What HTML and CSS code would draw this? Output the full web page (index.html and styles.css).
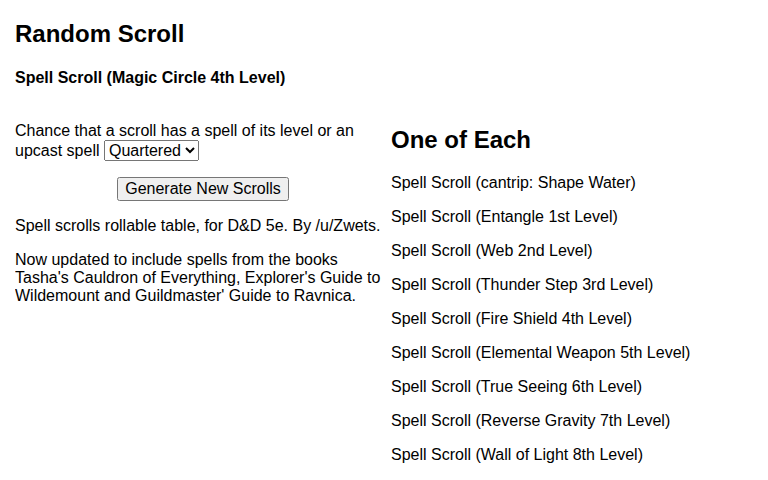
FILE: index.html
```html
<!DOCTYPE html>
<html>
<head>
<meta charset="utf-8">
<title>Random Scroll</title>
<link rel="stylesheet" href="styles.css">
</head>
<body>
<h2 class="title">Random Scroll</h2>
<h4 class="current">Spell Scroll (Magic Circle 4th Level)</h4>
<div class="columns">
  <div class="left">
    <p class="chance">Chance that a scroll has a spell of its level or an upcast spell <select class="chance-select"><option>Quartered</option><option>Halved</option><option>Full</option><option>None</option></select></p>
    <div class="actions"><button class="generate" type="button">Generate New Scrolls</button></div>
    <p>Spell scrolls rollable table, for D&amp;D 5e. By /u/Zwets.</p>
    <p>Now updated to include spells from the books Tasha's Cauldron of Everything, Explorer's Guide to Wildemount and Guildmaster' Guide to Ravnica.</p>
  </div>
  <div class="right">
    <h2 class="section-title">One of Each</h2>
    <p class="scroll">Spell Scroll (cantrip: Shape Water)</p>
    <p class="scroll">Spell Scroll (Entangle 1st Level)</p>
    <p class="scroll">Spell Scroll (Web 2nd Level)</p>
    <p class="scroll">Spell Scroll (Thunder Step 3rd Level)</p>
    <p class="scroll">Spell Scroll (Fire Shield 4th Level)</p>
    <p class="scroll">Spell Scroll (Elemental Weapon 5th Level)</p>
    <p class="scroll">Spell Scroll (True Seeing 6th Level)</p>
    <p class="scroll">Spell Scroll (Reverse Gravity 7th Level)</p>
    <p class="scroll">Spell Scroll (Wall of Light 8th Level)</p>
  </div>
</div>
</body>
</html>
```
FILE: styles.css
```css
html, body {
  background: #ffffff;
}
body {
  margin: 0 15px;
  font-family: "Liberation Sans", Arial, sans-serif;
  font-size: 16px;
  color: #000000;
}
.title {
  font-size: 24px;
  margin: 20px 0;
}
.current {
  font-size: 16px;
  margin: 21px 0 19px;
}
.columns {
  display: flex;
  align-items: flex-start;
}
.left {
  width: 376px;
  flex: none;
}
.right {
  flex: 1;
}
.left p, .right p {
  margin: 16px 0;
}
.actions {
  text-align: center;
  margin: 16px 0;
}
.generate, .chance-select {
  font-family: inherit;
  font-size: 16px;
}
.section-title {
  font-size: 24px;
  margin: 20px 0;
}
```
